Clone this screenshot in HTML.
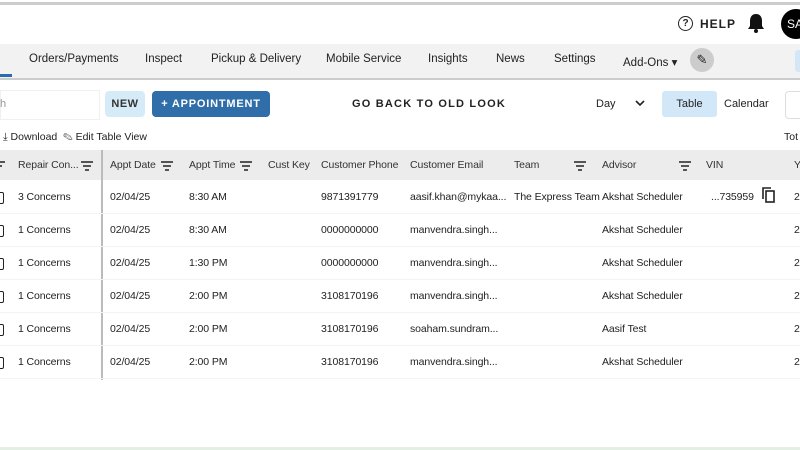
<!DOCTYPE html><html><head><style>
body{margin:0;width:800px;height:450px;overflow:hidden;background:#fff;font-family:"Liberation Sans",sans-serif;color:#222;position:relative}
.a{position:absolute;white-space:nowrap}
.nav{font-size:11.5px;color:#222;top:53px}
.h{font-size:10.5px;top:159px;color:#333;letter-spacing:-.1px}
.c{font-size:10.5px;color:#222;letter-spacing:-.1px}
.f{position:absolute;width:12px;height:9px}
.f i{position:absolute;left:0;height:1.5px;background:#555}
</style></head><body>
<div class="a" style="left:0;top:2px;width:800px;height:3px;background:#ccc"></div>
<div class="a" style="left:678px;top:16px;width:13px;height:13px;border:1.5px solid #222;border-radius:50%;font-size:10px;text-align:center;line-height:13px;font-weight:bold">?</div>
<div class="a" style="left:700px;top:17px;font-size:12px;letter-spacing:1px;font-weight:bold;color:#222">HELP</div>
<svg class="a" style="left:746px;top:12px" width="20" height="22" viewBox="0 0 20 22"><path d="M10 2c-4 0-6 3-6 7v5l-2 3h16l-2-3V9c0-4-2-7-6-7z" fill="#111"/><circle cx="10" cy="19" r="2" fill="#111"/></svg>
<div class="a" style="left:781px;top:9px;width:30px;height:30px;border-radius:50%;background:#000;color:#fff;font-size:12px;line-height:30px;text-indent:6px">SA</div>
<div class="a" style="left:0;top:44px;width:800px;height:34px;background:#f2f2f2;border-bottom:2px solid #ccc"></div>
<div class="a" style="left:0;top:74px;width:12px;height:3px;background:#2b6cb0"></div>
<div class="a nav" style="left:29px">Orders/Payments</div>
<div class="a nav" style="left:145px">Inspect</div>
<div class="a nav" style="left:211px">Pickup &amp; Delivery</div>
<div class="a nav" style="left:326px">Mobile Service</div>
<div class="a nav" style="left:428px">Insights</div>
<div class="a nav" style="left:496px">News</div>
<div class="a nav" style="left:554px">Settings</div>
<div class="a nav" style="left:623px;top:55px">Add-Ons ▾</div>
<div class="a" style="left:690px;top:48px;width:24px;height:24px;border-radius:50%;background:#ccc;text-align:center;line-height:24px;font-size:13px">✎</div>
<div class="a" style="left:795px;top:50px;width:10px;height:22px;background:#d3e7f7;border-radius:3px"></div>
<div class="a" style="left:0;top:90px;width:98px;height:28px;background:#fff;border:1px solid #f0f0f0"></div>
<div class="a" style="left:0;top:98px;font-size:11px;color:#999">h</div>
<div class="a" style="left:105px;top:91px;width:40px;height:26px;background:#d6ebf8;border-radius:4px;font-size:11px;font-weight:bold;text-align:center;line-height:26px;color:#333;letter-spacing:.5px">NEW</div>
<div class="a" style="left:152px;top:91px;width:118px;height:26px;background:#2f6ea8;border-radius:4px;font-size:11px;font-weight:bold;text-align:center;line-height:26px;color:#fff;letter-spacing:.8px">+ APPOINTMENT</div>
<div class="a" style="left:349px;top:91px;width:160px;height:26px;background:#fff;border-radius:4px;font-size:11px;font-weight:bold;text-align:center;line-height:26px;color:#222;letter-spacing:1.2px">GO BACK TO OLD LOOK</div>
<div class="a" style="left:596px;top:98px;font-size:11px">Day</div>
<svg class="a" style="left:635px;top:100px" width="10" height="7"><path d="M1 1l4 4 4-4" fill="none" stroke="#222" stroke-width="1.6"/></svg>
<div class="a" style="left:662px;top:91px;width:55px;height:26px;background:#d2e8f8;border-radius:3px;font-size:11px;text-align:center;line-height:26px">Table</div>
<div class="a" style="left:724px;top:98px;font-size:11px">Calendar</div>
<div class="a" style="left:785px;top:91px;width:20px;height:26px;border:1px solid #ddd;border-radius:4px"></div>
<div class="a" style="left:3px;top:131px;font-size:10.5px">⤓ Download &nbsp;✎ Edit Table View</div>
<div class="a" style="left:784px;top:131px;font-size:10.5px">Tot</div>
<div class="a" style="left:0;top:150px;width:800px;height:30px;background:#ececec"></div>
<div class="a" style="left:101px;top:150px;width:2px;height:230px;background:#bbb"></div>
<div class="a h" style="left:18px">Repair Con...</div>
<div class="a h" style="left:110px">Appt Date</div>
<div class="a h" style="left:189px">Appt Time</div>
<div class="a h" style="left:268px">Cust Key</div>
<div class="a h" style="left:321px">Customer Phone</div>
<div class="a h" style="left:410px">Customer Email</div>
<div class="a h" style="left:514px">Team</div>
<div class="a h" style="left:602px">Advisor</div>
<div class="a h" style="left:706px">VIN</div>
<div class="a h" style="left:794px">Y</div>
<div class="f" style="left:81px;top:161px"><i style="top:0;width:12px"></i><i style="top:4px;left:2px;width:8px"></i><i style="top:8px;left:4px;width:4px"></i></div>
<div class="f" style="left:161px;top:161px"><i style="top:0;width:12px"></i><i style="top:4px;left:2px;width:8px"></i><i style="top:8px;left:4px;width:4px"></i></div>
<div class="f" style="left:240px;top:161px"><i style="top:0;width:12px"></i><i style="top:4px;left:2px;width:8px"></i><i style="top:8px;left:4px;width:4px"></i></div>
<div class="f" style="left:574px;top:161px"><i style="top:0;width:12px"></i><i style="top:4px;left:2px;width:8px"></i><i style="top:8px;left:4px;width:4px"></i></div>
<div class="f" style="left:679px;top:161px"><i style="top:0;width:12px"></i><i style="top:4px;left:2px;width:8px"></i><i style="top:8px;left:4px;width:4px"></i></div>
<div class="f" style="left:-5px;top:161px"><i style="top:0;width:10px"></i><i style="top:4px;width:7px"></i></div>
<div id="rows"></div>
<script>
var d=[["3 Concerns","8:30 AM","9871391779","aasif.khan@mykaa...","The Express Team","Akshat Scheduler"],
["1 Concerns","8:30 AM","0000000000","manvendra.singh...","","Akshat Scheduler"],
["1 Concerns","1:30 PM","0000000000","manvendra.singh...","","Akshat Scheduler"],
["1 Concerns","2:00 PM","3108170196","manvendra.singh...","","Akshat Scheduler"],
["1 Concerns","2:00 PM","3108170196","soaham.sundram...","","Aasif Test"],
["1 Concerns","2:00 PM","3108170196","manvendra.singh...","","Akshat Scheduler"]];
var h="";d.forEach(function(r,i){var t=191+i*33;
h+='<div class="a" style="left:0;top:'+(t+22)+'px;width:800px;height:1px;background:#f3f3f3"></div>';
h+='<div class="a" style="left:-4px;top:'+(t+1)+'px;width:6px;height:10px;border:1.5px solid #222;border-radius:2px"></div>';
var x=[18,110,189,321,410,514,602],v=[r[0],"02/04/25",r[1],r[2],r[3],r[4],r[5]];
for(var j=0;j<7;j++)h+='<div class="a c" style="left:'+x[j]+'px;top:'+t+'px">'+v[j]+'</div>';
h+='<div class="a c" style="left:794px;top:'+t+'px">2</div>';});
h+='<div class="a c" style="left:711px;top:191px">...735959</div><svg class="a" style="left:762px;top:187px" width="14" height="16"><rect x="4" y="4" width="8" height="11" fill="none" stroke="#222" stroke-width="1.6"/><path d="M1 12V1h8" fill="none" stroke="#222" stroke-width="1.6"/></svg>';
document.getElementById("rows").innerHTML=h;
</script>
<div class="a" style="left:0;top:447px;width:800px;height:3px;background:#e3efe3"></div>
</body></html>
